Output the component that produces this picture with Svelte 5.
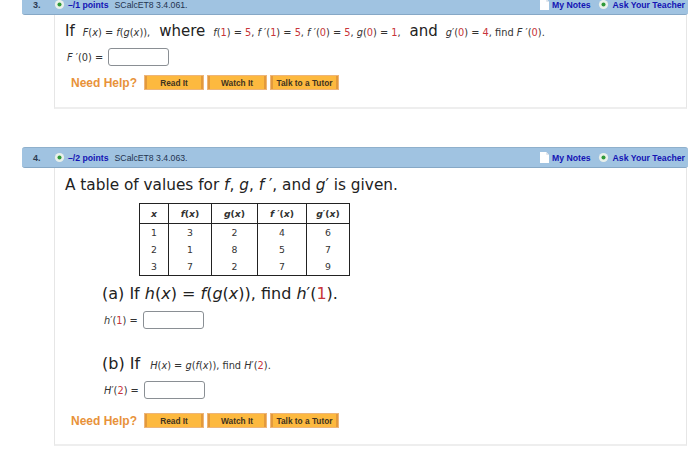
<script>
  const rows = [[1,3,2,4,6],[2,1,8,5,7],[3,7,2,7,9]];
</script>

{#snippet plus()}
  <svg class="plus" viewBox="0 0 12 12" width="11" height="11"><circle cx="6" cy="6" r="5" fill="#e9f0ea"/><circle cx="6" cy="6" r="2.2" fill="#2f9a38"/></svg>
{/snippet}

{#snippet head(num, pts, code, first)}
  <header class:first>
    <b class="num">{num}</b>
    {@render plus()}
    <b class="pts">–/{pts} points</b>
    <span class="code">SCalcET8 {code}.</span>
    <span class="right">
      <svg class="note" viewBox="0 0 10 12" width="9" height="11"><path d="M0 0h7l3 3v9H0z" fill="#fff"/><path d="M7 0l3 3H7z" fill="#d5dde5"/></svg>
      <b class="link">My Notes</b>
      {@render plus()}
      <b class="link">Ask Your Teacher</b>
    </span>
  </header>
{/snippet}

{#snippet help()}
  <div class="help">
    <span class="need">Need Help?</span>
    <span class="btn b1">Read It</span>
    <span class="btn b1">Watch It</span>
    <span class="btn b2">Talk to a Tutor</span>
  </div>
{/snippet}

<main>
  <section>
    {@render head('3.', 1, '3.4.061', true)}
    <div class="body one">
      <p class="line">
        <span class="big">If</span>
        <span class="m a"><i>F</i>(<i>x</i>) = <i>f</i>(<i>g</i>(<i>x</i>)),</span>
        <span class="big">where</span>
        <span class="m a"><i>f</i>(<em>1</em>) = <em>5</em>, <i>f</i> ′(<em>1</em>) = <em>5</em>, <i>f</i> ′(<em>0</em>) = <em>5</em>, <i>g</i>(<em>0</em>) = <em>1</em>,</span>
        <span class="big">and</span>
        <span class="m a"><i>g</i>′(<em>0</em>) = <em>4</em>, find <i>F</i> ′(<em>0</em>).</span>
      </p>
      <div class="answer a1"><span class="m"><i>F</i> ′(0) =</span><span class="box"></span></div>
      {@render help()}
    </div>
  </section>

  <section class="second">
    {@render head('4.', 2, '3.4.063', false)}
    <div class="body two">
      <p class="lead">A table of values for <i>f</i>, <i>g</i>, <i>f</i> ′, and <i>g</i>′ is given.</p>
      <table>
        <thead><tr><th><i>x</i></th><th><i>f</i>(<i>x</i>)</th><th><i>g</i>(<i>x</i>)</th><th><i>f</i> ′(<i>x</i>)</th><th><i>g</i>′(<i>x</i>)</th></tr></thead>
        <tbody>
          {#each rows as r}<tr>{#each r as c}<td>{c}</td>{/each}</tr>{/each}
        </tbody>
      </table>
      <p class="part pa">(a) If <i>h</i>(<i>x</i>) = <i>f</i>(<i>g</i>(<i>x</i>)), find <i>h</i>′(<em>1</em>).</p>
      <div class="answer a2"><span class="m"><i>h</i>′(<em>1</em>) =</span><span class="box"></span></div>
      <p class="part pb">(b) If <span class="m b"><i>H</i>(<i>x</i>) = <i>g</i>(<i>f</i>(<i>x</i>)), find <i>H</i>′(<em>2</em>).</span></p>
      <div class="answer a3"><span class="m"><i>H</i>′(<em>2</em>) =</span><span class="box"></span></div>
      {@render help()}
    </div>
  </section>
</main>

<style>
  :global(body) { margin: 0; background: #fff; }
  main { width: 700px; height: 456px; overflow: hidden; padding-left: 22px; box-sizing: border-box; font-family: "DejaVu Sans", sans-serif; color: #222; }
  section { width: 666px; }
  .second { margin-top: 38px; }
  header { height: 21px; background: #a0c3e1; border-radius: 3px; border-top: 1px solid #8fb0cc; border-bottom: 1px solid #86a8c6; box-sizing: border-box; display: flex; align-items: center; font-family: "Liberation Sans", sans-serif; font-size: 8.7px; color: #223; }
  header.first { height: 15px; border-top: 0; border-radius: 0 0 3px 3px; padding-bottom: 5px; }
  .num { width: 32px; padding-left: 11px; box-sizing: border-box; flex: none; font-size: 9px; color: #2c3a50; }
  .plus { flex: none; }
  .pts { color: #1414b4; margin-left: 3px; }
  .code { margin-left: 6px; color: #1f3350; }
  .right { margin-left: auto; display: flex; align-items: center; padding-right: 3px; }
  .note { margin-right: 3px; }
  .link { color: #1414b4; }
  .right .link + .plus { margin-left: 7px; margin-right: 4px; }
  .body { margin-left: 32px; width: 633px; border-left: 1px solid #e6e6e6; border-right: 1px solid #e6e6e6; box-sizing: border-box; padding-left: 10px; }
  .one { height: 94px; border-bottom: 2px solid #eee; padding-top: 7px; }
  .two { height: 278px; border-bottom: 2px solid #eee; padding-top: 8px; }
  p { margin: 0; }
  .line { display: flex; align-items: baseline; white-space: pre; height: 19px; }
  .big { font-size: 15px; color: #222; }
  .m { font-size: 9.8px; color: #333; white-space: pre; }
  .m.a { margin: 0 9px 0 8px; }
  em { font-style: normal; color: #c8353a; }
  .answer { display: flex; align-items: center; gap: 5px; padding-left: 2px; }
  .box { display: block; width: 61px; height: 18px; box-sizing: border-box; border: 1px solid #8a8f94; border-radius: 3px; background: #fff; }
  .a1 { margin-top: 7px; }
  .help { display: flex; align-items: center; margin-top: 9px; padding-left: 6px; font-family: "Liberation Sans", sans-serif; }
  .need { font-size: 12px; font-weight: bold; color: #e8923a; width: 73px; flex: none; }
  .btn { display: flex; align-items: center; justify-content: center; height: 15px; box-sizing: border-box; background: #fdb93f; border: 1px solid #eeb578; box-shadow: inset 2px 0 0 #e39a3c, inset -2px 0 0 #e39a3c; font-size: 8.3px; font-weight: bold; color: #3f3320; margin-right: 3px; }
  .b1 { width: 60px; }
  .b2 { width: 69px; }
  .lead { font-size: 15.3px; height: 24px; color: #222; }
  table { border-collapse: collapse; margin: 3px 0 0 74px; font-size: 9.3px; table-layout: fixed; width: 211px; color: #333; border: 1px solid #222; }
  th, td { border-left: 1px solid #222; border-right: 1px solid #222; padding: 0; text-align: center; height: 17px; }
  th { border-bottom: 1px solid #222; height: 19px; font-weight: bold; }
  th:nth-child(1), td:nth-child(1) { width: 28px; }
  th:nth-child(2), td:nth-child(2) { width: 42px; }
  th:nth-child(3), td:nth-child(3) { width: 45px; }
  th:nth-child(4), td:nth-child(4) { width: 48px; }
  .part { font-size: 16px; margin-left: 37px; color: #222; white-space: pre; }
  .pa { margin-top: 8px; }
  .a2 { margin: 8px 0 0 37px; }
  .pb { margin-top: 25px; }
  .a3 { margin: 8px 0 0 37px; }
  .b { margin-left: 5px; }
  .two .help { margin-top: 14px; }
</style>
